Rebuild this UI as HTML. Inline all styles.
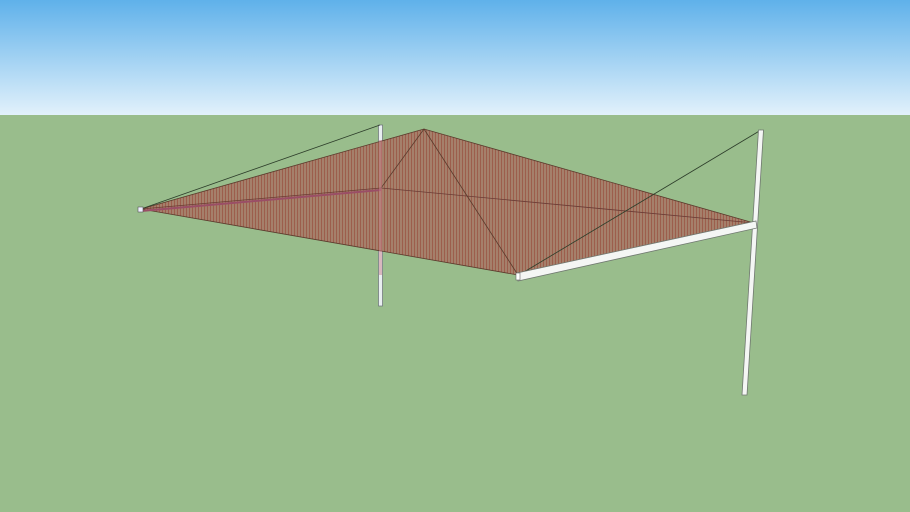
<!DOCTYPE html>
<html><head><meta charset="utf-8"><style>html,body{margin:0;padding:0;width:910px;height:512px;overflow:hidden}</style></head>
<body>
<svg width="910" height="512" viewBox="0 0 910 512" xmlns="http://www.w3.org/2000/svg">
<defs>
<linearGradient id="sky" x1="0" y1="0" x2="0" y2="1">
<stop offset="0" stop-color="#5fb1ea"/><stop offset="1" stop-color="#e2f1fb"/>
</linearGradient>
<pattern id="st" width="3" height="10" patternUnits="userSpaceOnUse">
<rect width="3" height="10" fill="#a5806b"/><rect width="1" height="10" fill="#9c5e4c"/>
</pattern>
</defs>
<rect width="910" height="115" fill="url(#sky)"/>
<rect y="115" width="910" height="397" fill="#99bd8c"/>
<rect x="378.5" y="125" width="4" height="181" fill="#e8eef0" stroke="#6a7078" stroke-width="0.7"/>
<polygon points="141,209 424,129 754,223 518,275" fill="url(#st)" stroke="#5a3a2c" stroke-width="0.8"/>
<polyline points="141,209 381,188 754,223" fill="none" stroke="#6b3b35" stroke-width="0.8"/>
<line x1="141" y1="211" x2="381" y2="190" stroke="#9a4e66" stroke-width="2"/>
<line x1="424" y1="129" x2="381" y2="188" stroke="#5a3a2c" stroke-width="0.8"/>
<line x1="424" y1="129" x2="518" y2="275" stroke="#5a3a2c" stroke-width="0.8"/>
<rect x="379" y="140" width="3" height="135" fill="#c77f8c" opacity="0.5"/>
<line x1="141" y1="209" x2="380" y2="125" stroke="#2d3d2a" stroke-width="0.8"/>
<line x1="519" y1="275" x2="761" y2="130" stroke="#2d3d2a" stroke-width="0.8"/>
<rect x="138" y="207" width="5" height="5" fill="#eef" stroke="#555" stroke-width="0.6"/>
<polygon points="758.5,130 763.5,130 747,395 742,395" fill="#f4f6f4" stroke="#707870" stroke-width="0.8"/>
<polygon points="517,273 756,221 757,228 518,281" fill="#f4f6f4" stroke="#707870" stroke-width="0.8"/>
<rect x="516" y="273" width="4" height="7" fill="#fff" stroke="#666" stroke-width="0.6"/>
</svg>
</body></html>
